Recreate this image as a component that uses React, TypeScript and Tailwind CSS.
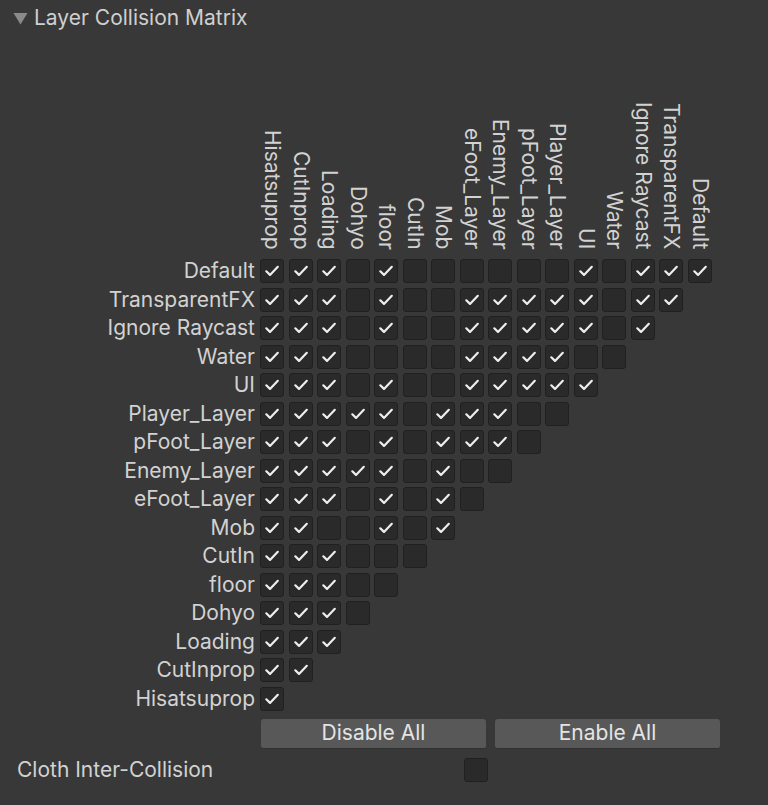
import React from 'react';

const layers = [
  'Default',
  'TransparentFX',
  'Ignore Raycast',
  'Water',
  'UI',
  'Player_Layer',
  'pFoot_Layer',
  'Enemy_Layer',
  'eFoot_Layer',
  'Mob',
  'CutIn',
  'floor',
  'Dohyo',
  'Loading',
  'CutInprop',
  'Hisatsuprop',
];

// columns go right-to-left in layer order
const columns = [...layers].reverse();

// row i has 16 - i cells, left column first (Hisatsuprop)
const matrix: number[][] = [
  [1, 1, 1, 0, 1, 0, 0, 0, 0, 0, 0, 1, 0, 1, 1, 1],
  [1, 1, 1, 0, 1, 0, 0, 1, 1, 1, 1, 1, 0, 1, 1],
  [1, 1, 1, 0, 1, 0, 0, 1, 1, 1, 1, 1, 0, 1],
  [1, 1, 1, 0, 0, 0, 0, 1, 1, 1, 1, 0, 0],
  [1, 1, 1, 0, 1, 0, 0, 1, 1, 1, 1, 1],
  [1, 1, 1, 1, 1, 0, 1, 1, 1, 0, 0],
  [1, 1, 1, 0, 1, 0, 1, 1, 1, 0],
  [1, 1, 1, 1, 1, 0, 1, 0, 0],
  [1, 1, 1, 0, 1, 0, 1, 0],
  [1, 1, 0, 0, 1, 0, 1],
  [1, 1, 1, 0, 0, 0],
  [1, 1, 1, 0, 0],
  [1, 1, 1, 0],
  [1, 1, 1],
  [1, 1],
  [1],
];

function Toggle({ checked }: { checked: boolean }) {
  return (
    <div className="w-[24px] h-[24px] shrink-0 rounded-[3px] bg-[#2a2a2a] border border-[#202020] flex items-center justify-center">
      {checked && (
        <svg width="18" height="18" viewBox="0 0 18 18" fill="none">
          <path d="M3.3 9.3 L7 12.9 L14.8 4.8" stroke="#eeeeee" strokeWidth="2.2" strokeLinecap="round" strokeLinejoin="round" />
        </svg>
      )}
    </div>
  );
}

export default function App() {
  return (
    <div
      className="w-[768px] h-[805px] bg-[#383838] text-[#d2d2d2] text-[21px] leading-[24px] overflow-hidden"
      style={{ fontFamily: 'Inter, "Liberation Sans", sans-serif' }}
    >
      <div className="flex items-center pl-[13px] pt-[6px]">
        <svg width="15" height="13" viewBox="0 0 15 13" className="mr-[6px]">
          <path d="M0.5 1 H14.5 L7.5 12.5 Z" fill="#8a8a8a" />
        </svg>
        <span className="text-[#cfcfcf]">Layer Collision Matrix</span>
      </div>

      <div className="flex gap-[4.5px] items-end pl-[260px] mt-[72px]">
        {columns.map((c) => (
          <div key={c} className="w-[24px] flex justify-center">
            <span className="[writing-mode:vertical-rl] whitespace-nowrap">{c}</span>
          </div>
        ))}
      </div>

      <div className="flex flex-col gap-[4.5px] mt-[10px]">
        {layers.map((name, i) => (
          <div key={name} className="flex items-center">
            <div className="w-[256px] pr-[1px] text-right whitespace-nowrap">{name}</div>
            <div className="flex gap-[4.5px] ml-[4px]">
              {matrix[i].map((v, j) => (
                <Toggle key={j} checked={v === 1} />
              ))}
            </div>
          </div>
        ))}
      </div>

      <div className="flex gap-[9px] pl-[261px] mt-[8px]">
        <button className="w-[225px] h-[30px] rounded-[3px] bg-[#585858] text-[#e4e4e4] border-b border-[#303030]">
          Disable All
        </button>
        <button className="w-[225px] h-[30px] rounded-[3px] bg-[#585858] text-[#e4e4e4] border-b border-[#303030]">
          Enable All
        </button>
      </div>

      <div className="flex items-center mt-[9px] pl-[17px]">
        <span className="w-[447px]">Cloth Inter-Collision</span>
        <Toggle checked={false} />
      </div>
    </div>
  );
}
